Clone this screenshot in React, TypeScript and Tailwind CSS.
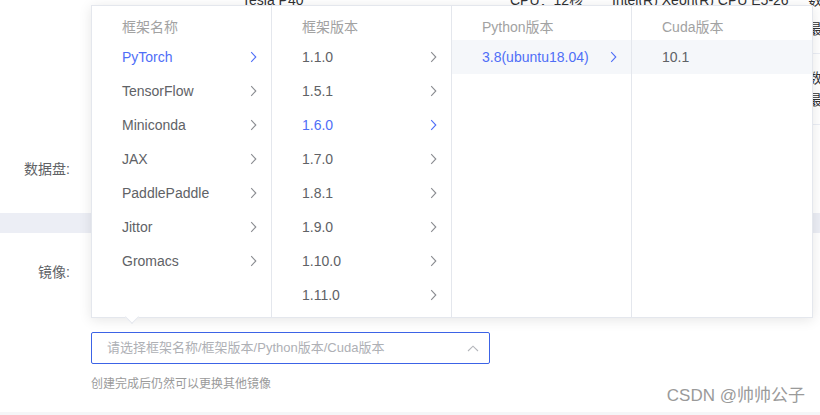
import React from "react"

const FRAMEWORKS = ["PyTorch", "TensorFlow", "Miniconda", "JAX", "PaddlePaddle", "Jittor", "Gromacs"]
const VERSIONS = ["1.1.0", "1.5.1", "1.6.0", "1.7.0", "1.8.1", "1.9.0", "1.10.0", "1.11.0"]
const PYTHONS = ["3.8(ubuntu18.04)"]
const CUDAS = ["10.1"]

function ChevronRight({ className }: { className: string }) {
  return (
    <svg width="7" height="12" viewBox="0 0 7 12" fill="none" className={className}>
      <path d="M1.2 1.2L5.8 6L1.2 10.8" stroke="currentColor" strokeWidth="1.1" />
    </svg>
  )
}

type Column = {
  title: string
  items: string[]
  active: string
  hover?: string
  arrow: boolean
}

const COLUMNS: Column[] = [
  { title: "框架名称", items: FRAMEWORKS, active: "PyTorch", arrow: true },
  { title: "框架版本", items: VERSIONS, active: "1.6.0", arrow: true },
  { title: "Python版本", items: PYTHONS, active: "3.8(ubuntu18.04)", hover: "3.8(ubuntu18.04)", arrow: true },
  { title: "Cuda版本", items: CUDAS, active: "", hover: "10.1", arrow: false },
]

function CascaderPanel() {
  return (
    <div className="absolute left-[91px] top-[5px] flex h-[313px] border border-[#e4e7ed] bg-white shadow-[0_2px_12px_rgba(0,0,0,0.1)]">
      {COLUMNS.map((col, i) => (
        <div key={col.title} className={`flex w-[180px] flex-col ${i < 3 ? "border-r border-[#e4e7ed]" : ""}`}>
          <div className="h-[34px] pl-[30px] pt-[11px] text-[14px] leading-[20px] text-[#a2a2a2]">{col.title}</div>
          {col.items.map((item) => {
            const isActive = item === col.active
            const isHover = item === col.hover
            return (
              <div
                key={item}
                className={`flex h-[34px] items-center justify-between pl-[30px] pr-[14px] text-[14px] ${
                  isActive ? "text-[#4f6ef7]" : "text-[#606266]"
                } ${isHover ? "bg-[#f5f7fa]" : ""}`}
              >
                <span>{item}</span>
                {col.arrow && <ChevronRight className={isActive ? "text-[#4f6ef7]" : "text-[#8a8c91]"} />}
              </div>
            )
          })}
        </div>
      ))}
      {/* popper arrow */}
      <div className="absolute left-[35px] top-[306px] h-[10px] w-[10px] rotate-45 border-b border-r border-[#e4e7ed] bg-white" />
    </div>
  )
}

export default function App() {
  return (
    <div className="relative h-[415px] w-[820px] overflow-hidden bg-white font-[family-name:'Liberation_Sans','Noto_Sans_CJK_SC',sans-serif]">
      {/* spec table, mostly under the popper */}
      <div className="-mt-[18px] flex text-[14px] text-[#303133]">
        <div className="ml-[242px] w-[268px] shrink-0 pt-[4px] leading-[28px]">Tesla P40</div>
        <div className="w-[102px] shrink-0 pt-[4px] leading-[28px]">CPU：12核</div>
        <div className="w-[196px] shrink-0 overflow-hidden whitespace-nowrap pt-[4px] leading-[28px]">Intel(R) Xeon(R) CPU E5-26</div>
        <div className="min-w-0 flex-1 overflow-hidden whitespace-nowrap">
          <div className="border-b border-[#ebeef5] pb-[9px] pt-[4px] leading-[29px]">
            <div>数据盘：免费50GB</div>
            <div>最大可扩容</div>
          </div>
          <div className="border-b border-[#ebeef5] pb-[13px] pt-[13px] leading-[22px]">
            <div>数据盘：免费50GB</div>
            <div>最大可扩容</div>
          </div>
        </div>
      </div>

      <div className="flex h-[88px] text-[14px] leading-[20px] text-[#606266]">
        <div className="w-[70px] pt-[34px] text-right">数据盘:</div>
      </div>

      <div className="h-[20px] bg-[#eceef5]" />

      <div className="flex h-[179px] text-[14px] leading-[20px]">
        <div className="w-[70px] pt-[29px] text-right text-[#606266]">镜像:</div>
        <div className="ml-[21px] flex flex-col pt-[99px]">
          <div className="flex h-[32px] w-[399px] items-center justify-between rounded-[2px] border border-[#3c63e6] pl-[15px] pr-[10px]">
            <span className="text-[13px] text-[#aeb0b5]">请选择框架名称/框架版本/Python版本/Cuda版本</span>
            <svg width="12" height="7" viewBox="0 0 12 7" fill="none" className="text-[#b4b6bb]">
              <path d="M1 6L6 1.2L11 6" stroke="currentColor" strokeWidth="1.1" />
            </svg>
          </div>
          <div className="mt-[11px] text-[12px] leading-[18px] text-[#9a9a9a]">创建完成后仍然可以更换其他镜像</div>
        </div>
      </div>

      <div className="h-[20px] bg-[#f5f6f8]" />

      <CascaderPanel />

      <div className="absolute right-[15px] top-[385px] text-[17px] leading-[22px] text-[#9a9a9a]">CSDN @帅帅公子</div>
    </div>
  )
}
